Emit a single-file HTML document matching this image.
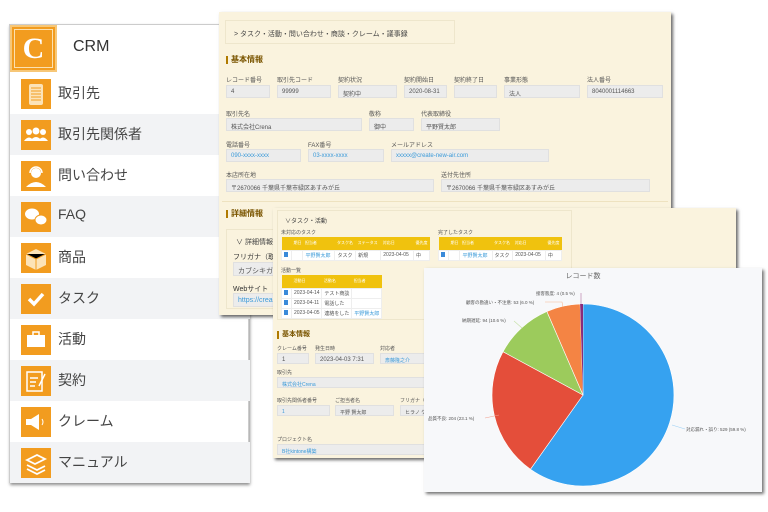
<!DOCTYPE html>
<html><head><meta charset="utf-8">
<style>
*{margin:0;padding:0;box-sizing:border-box}
body{width:768px;height:512px;background:#fff;position:relative;overflow:hidden;font-family:"Liberation Sans","Noto Sans CJK JP",sans-serif;color:#444}
.a{position:absolute}
.side{left:9px;top:24px;width:240px;height:459px;background:#fff;box-shadow:1px 2px 3px rgba(0,0,0,.45);border:1px solid #ccc}
.row{position:absolute;left:0;width:240px;height:41px}
.row.g{background:#f2f3f5}
.ic{position:absolute;left:11px;top:6px;width:30px;height:30px;background:#f29c1f}
.ic svg{display:block}
.row span{position:absolute;left:48px;top:10px;font-size:14px;color:#444}
.p{background:#faf3de;box-shadow:2px 2px 3px rgba(0,0,0,.6)}
.lb{position:absolute;font-size:6px;color:#555}
.in{position:absolute;background:#ececec;border:1px solid #e0e0e0;font-size:6px;color:#555;padding:3px 0 0 4px;white-space:nowrap;overflow:hidden}
.bl{color:#3a9ad9}
.h{position:absolute;font-size:8px;font-weight:bold;color:#7a5500;border-left:2px solid #b07a00;padding-left:3px;line-height:8px}
table{border-collapse:collapse;position:absolute;font-size:5px;table-layout:auto}
th{background:#f0c20e;color:#fff;height:13px;font-weight:normal;text-align:left;padding-left:2px;font-size:4px;white-space:nowrap}
td{background:#fff;border:1px solid #eee;height:10px;padding-left:2px;color:#555;white-space:nowrap}
.d{display:inline-block;width:4px;height:5px;background:#3a8ad9}
</style></head><body>

<div class="a side">
  <div class="a" style="left:0;top:0;width:47px;height:47px;background:#f29c1f;border:2px solid #f7c777"><div class="a" style="left:2px;top:2px;width:39px;height:39px;border:1px solid #fbe0b0;color:#fff;font:bold 30px 'Liberation Serif',serif;text-align:center;line-height:38px">C</div></div>
  <div class="a" style="left:63px;top:13px;font-size:16px;color:#333">CRM</div>
  <div class="row" style="top:48px"><div class="ic"><svg width="30" height="30"><rect x="8" y="5" width="14" height="21" rx="2" fill="#fce3b8"/><path d="M10 9h10M10 12h10M10 15h10M10 18h10M10 21h10" stroke="#f29c1f" stroke-width="1"/></svg></div><span>取引先</span></div>
  <div class="row g" style="top:89px"><div class="ic"><svg width="30" height="30"><g fill="#fff"><circle cx="8" cy="12" r="3"/><circle cx="15" cy="11" r="3.5"/><circle cx="22" cy="12" r="3"/><path d="M3 21q5-7 10 0zM9 21q6-8 12 0zM17 21q5-7 10 0z"/></g></svg></div><span>取引先関係者</span></div>
  <div class="row" style="top:130px"><div class="ic"><svg width="30" height="30"><circle cx="15" cy="12" r="5" fill="#fff"/><path d="M9 12a6 6 0 0 1 12 0" stroke="#fff" fill="none" stroke-width="1.5"/><path d="M5 26q10-10 20 0z" fill="#fff"/></svg></div><span>問い合わせ</span></div>
  <div class="row g" style="top:171px"><div class="ic"><svg width="30" height="30"><ellipse cx="11" cy="12" rx="7" ry="5.5" fill="#fff"/><ellipse cx="20" cy="18" rx="6" ry="5" fill="#fff" stroke="#f29c1f"/></svg></div><span>FAQ</span></div>
  <div class="row" style="top:212px"><div class="ic"><svg width="30" height="30"><path d="M5 11l10-5 10 5v11l-10 5-10-5z" fill="#fce3b8"/><path d="M5 11l10 5 10-5M15 16v11" stroke="#f29c1f"/></svg></div><span>商品</span></div>
  <div class="row g" style="top:253px"><div class="ic"><svg width="30" height="30"><path d="M8 15l5 5 9-10" stroke="#fff" stroke-width="3.5" fill="none"/></svg></div><span>タスク</span></div>
  <div class="row" style="top:294px"><div class="ic"><svg width="30" height="30"><rect x="6" y="10" width="18" height="12" fill="#fff"/><rect x="12" y="7" width="6" height="4" fill="none" stroke="#fff" stroke-width="1.5"/></svg></div><span>活動</span></div>
  <div class="row g" style="top:335px"><div class="ic"><svg width="30" height="30"><rect x="6" y="6" width="15" height="19" fill="none" stroke="#fff" stroke-width="1.5"/><path d="M9 12h8M9 16h6M9 20h5M18 20l6-12" stroke="#fff" stroke-width="1.5"/></svg></div><span>契約</span></div>
  <div class="row" style="top:376px"><div class="ic"><svg width="30" height="30"><path d="M5 12h5l8-5v16l-8-5H5z" fill="#fff"/><path d="M21 12q2 3 0 6" stroke="#fff" fill="none"/></svg></div><span>クレーム</span></div>
  <div class="row g" style="top:417px"><div class="ic"><svg width="30" height="30"><path d="M6 12l10-5 8 4-10 5zM6 17l10 5 8-4M6 21l10 5 8-4" stroke="#fff" stroke-width="1.8" fill="none"/></svg></div><span>マニュアル</span></div>
</div>

<!-- panel 1 -->
<div class="a p" style="left:219px;top:12px;width:452px;height:303px"></div>
<div class="a" style="left:225px;top:20px;width:230px;height:24px;border:1px solid #eee6cc;font-size:7px;padding:8px 0 0 8px">&gt; タスク・活動・問い合わせ・商談・クレーム・議事録</div>
<div class="h" style="left:226px;top:56px">基本情報</div>
<div class="lb" style="left:226px;top:75px">レコード番号</div><div class="in" style="left:226px;top:85px;width:44px;height:13px">4</div>
<div class="lb" style="left:277px;top:75px">取引先コード</div><div class="in" style="left:277px;top:85px;width:54px;height:13px">99999</div>
<div class="lb" style="left:338px;top:75px">契約状況</div><div class="in" style="left:338px;top:85px;width:59px;height:13px">契約中</div>
<div class="lb" style="left:404px;top:75px">契約開始日</div><div class="in" style="left:404px;top:85px;width:43px;height:13px">2020-08-31</div>
<div class="lb" style="left:454px;top:75px">契約終了日</div><div class="in" style="left:454px;top:85px;width:43px;height:13px"></div>
<div class="lb" style="left:504px;top:75px">事業形態</div><div class="in" style="left:504px;top:85px;width:76px;height:13px">法人</div>
<div class="lb" style="left:587px;top:75px">法人番号</div><div class="in" style="left:587px;top:85px;width:76px;height:13px">8040001114663</div>
<div class="lb" style="left:226px;top:109px">取引先名</div><div class="in" style="left:226px;top:118px;width:136px;height:13px">株式会社Crena</div>
<div class="lb" style="left:369px;top:109px">敬称</div><div class="in" style="left:369px;top:118px;width:45px;height:13px">御中</div>
<div class="lb" style="left:421px;top:109px">代表取締役</div><div class="in" style="left:421px;top:118px;width:79px;height:13px">平野賢太郎</div>
<div class="lb" style="left:226px;top:140px">電話番号</div><div class="in bl" style="left:226px;top:149px;width:75px;height:13px">090-xxxx-xxxx</div>
<div class="lb" style="left:308px;top:140px">FAX番号</div><div class="in bl" style="left:308px;top:149px;width:76px;height:13px">03-xxxx-xxxx</div>
<div class="lb" style="left:391px;top:140px">メールアドレス</div><div class="in bl" style="left:391px;top:149px;width:158px;height:13px">xxxxx@create-new-air.com</div>
<div class="lb" style="left:226px;top:170px">本店所在地</div><div class="in" style="left:226px;top:179px;width:208px;height:13px">〒2670066 千葉県千葉市緑区あすみが丘</div>
<div class="lb" style="left:441px;top:170px">送付先住所</div><div class="in" style="left:441px;top:179px;width:209px;height:13px">〒2670066 千葉県千葉市緑区あすみが丘</div>
<div class="a" style="left:222px;top:201px;width:446px;height:1px;background:#eee2c0"></div>
<div class="h" style="left:226px;top:210px">詳細情報</div>
<div class="a" style="left:226px;top:229px;width:50px;height:80px;border:1px solid #eee6cc;border-right:none"></div>
<div class="a" style="left:236px;top:237px;font-size:7px">∨ 詳細情報</div>
<div class="a" style="left:233px;top:252px;font-size:7px;color:#333">フリガナ（取引</div>
<div class="in" style="left:233px;top:262px;width:45px;height:14px;font-size:7px">カブシキガイ</div>
<div class="a" style="left:233px;top:284px;font-size:7px;color:#333">Webサイト</div>
<div class="in bl" style="left:233px;top:293px;width:45px;height:14px;font-size:7px">https://crea</div>

<!-- panel 2 -->
<div class="a p" style="left:273px;top:208px;width:463px;height:250px"></div>
<div class="a" style="left:277px;top:210px;width:295px;height:110px;border:1px solid #eee6cc"></div>
<div class="a" style="left:285px;top:216px;font-size:6px">∨タスク・活動</div>
<div class="lb" style="left:281px;top:229px;font-size:5px">未対応のタスク</div>
<table style="left:281px;top:237px;width:149px"><tr><th style="width:10px"></th><th>期日</th><th>担当者</th><th>タスク名</th><th>ステータス</th><th>対応日</th><th>優先度</th></tr>
<tr><td><i class="d"></i></td><td></td><td class="bl">平野賢太郎</td><td>タスク</td><td>新規</td><td>2023-04-05</td><td>中</td></tr></table>
<div class="lb" style="left:438px;top:229px;font-size:5px">完了したタスク</div>
<table style="left:438px;top:237px;width:124px"><tr><th style="width:10px"></th><th>期日</th><th>担当者</th><th>タスク名</th><th>対応日</th><th>優先度</th></tr>
<tr><td><i class="d"></i></td><td></td><td class="bl">平野賢太郎</td><td>タスク</td><td>2023-04-05</td><td>中</td></tr></table>
<div class="lb" style="left:281px;top:267px;font-size:5px">活動一覧</div>
<table style="left:281px;top:275px;width:101px"><tr><th style="width:10px"></th><th>活動日</th><th>活動名</th><th>担当者</th></tr>
<tr><td><i class="d"></i></td><td>2023-04-14</td><td>テスト商談</td><td></td></tr>
<tr><td><i class="d"></i></td><td>2023-04-11</td><td>電話した</td><td></td></tr>
<tr><td><i class="d"></i></td><td>2023-04-05</td><td>連絡をした</td><td class="bl">平野賢太郎</td></tr></table>
<div class="h" style="left:277px;top:331px;font-size:7px">基本情報</div>
<div class="lb" style="left:277px;top:345px;font-size:5px">クレーム番号</div><div class="in" style="left:277px;top:353px;width:32px;height:11px">1</div>
<div class="lb" style="left:315px;top:345px;font-size:5px">発生日時</div><div class="in" style="left:315px;top:353px;width:59px;height:11px">2023-04-03 7:31</div>
<div class="lb" style="left:380px;top:345px;font-size:5px">対応者</div><div class="in bl" style="left:380px;top:353px;width:50px;height:11px;font-size:5px">斎藤隆之介</div>
<div class="lb" style="left:277px;top:369px;font-size:5px">取引先</div><div class="in bl" style="left:277px;top:377px;width:150px;height:11px;font-size:5px">株式会社Crena</div>
<div class="lb" style="left:277px;top:397px;font-size:5px">取引先関係者番号</div><div class="in bl" style="left:277px;top:405px;width:53px;height:11px;font-size:5px">1</div>
<div class="lb" style="left:335px;top:397px;font-size:5px">ご担当者名</div><div class="in" style="left:335px;top:405px;width:59px;height:11px;font-size:5px">平野 賢太郎</div>
<div class="lb" style="left:400px;top:397px;font-size:5px">フリガナ（</div><div class="in" style="left:400px;top:405px;width:30px;height:11px;font-size:5px">ヒラノ ケン</div>
<div class="lb" style="left:277px;top:436px;font-size:5px">プロジェクト名</div><div class="in bl" style="left:277px;top:444px;width:150px;height:11px;font-size:5px">B社kintone構築</div>

<!-- chart -->
<div class="a" style="left:424px;top:268px;width:338px;height:224px;background:#f7f8fa;box-shadow:2px 2px 3px rgba(0,0,0,.55)"></div>
<svg class="a" style="left:0;top:0" width="768" height="512">
<text x="583" y="278" font-size="7" fill="#666" text-anchor="middle" font-family="Liberation Sans,Noto Sans CJK JP,sans-serif">レコード数</text>
<path d="M583 395L583 304A91 91 0 1 1 530.4 469.3Z" fill="#36a2f0" stroke="#fff" stroke-width=".6"/>
<path d="M583 395L530.4 469.3A91 91 0 0 1 503 351.7Z" fill="#e44e3a" stroke="#fff" stroke-width=".6"/>
<path d="M583 395L503 351.7A91 91 0 0 1 546.9 311.5Z" fill="#9ccb5c" stroke="#fff" stroke-width=".6"/>
<path d="M583 395L546.9 311.5A91 91 0 0 1 580.1 304Z" fill="#f48444" stroke="#fff" stroke-width=".6"/>
<path d="M583 395L580.1 304A91 91 0 0 1 583 304Z" fill="#8a2b7a"/>
<g fill="none" stroke-width=".6">
<path d="M672 425L685 429" stroke="#9cd0f5"/>
<path d="M499 415L485 418" stroke="#f0a090"/>
<path d="M522 328L514 321" stroke="#c5e0a5"/>
<path d="M563 307L562 302H545" stroke="#f8b890"/>
<path d="M581 304L581 293" stroke="#b070a0"/>
</g>
<g font-size="4.5" fill="#555" font-family="Liberation Sans,Noto Sans CJK JP,sans-serif">
<text x="686" y="431">対応漏れ・誤り: 529 (59.8 %)</text>
<text x="428" y="420">品質不良: 204 (23.1 %)</text>
<text x="462" y="322">納期遅延: 94 (10.6 %)</text>
<text x="466" y="304">顧客の勘違い・不注意: 53 (6.0 %)</text>
<text x="536" y="295">接客態度: 4 (0.5 %)</text>
</g>
</svg>
</body></html>
